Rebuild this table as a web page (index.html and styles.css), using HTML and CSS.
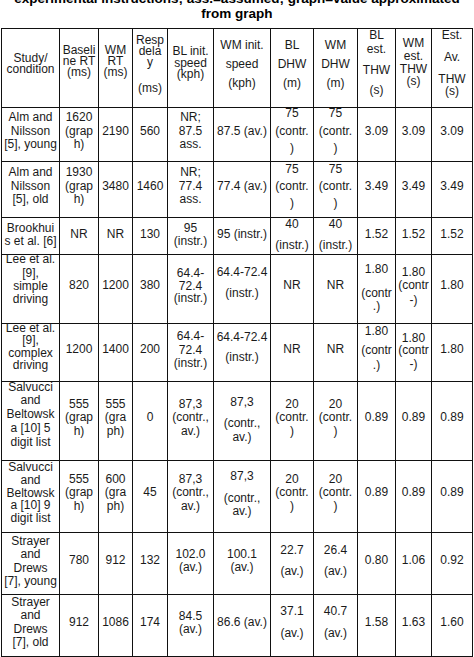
FILE: index.html
```html
<!DOCTYPE html>
<html lang="en">
<head>
<meta charset="utf-8">
<title>Table</title>
<link rel="stylesheet" href="styles.css">
</head>
<body>
<div class="title">experimental instructions; ass.=assumed; graph=value approximated<br>from graph</div>
<div class="grid">
  <!-- header -->
  <div class="c lh11 pb8"><span>Study/</span><span>condition</span></div>
  <div class="c lh11 pb14"><span>Baseli</span><span>ne RT</span><span>(ms)</span></div>
  <div class="c lh11 pb14"><span>WM</span><span>RT</span><span>(ms)</span></div>
  <div class="c lh113 pb7"><span>Resp</span><span>dela</span><span>y</span><span class="m14">(ms)</span></div>
  <div class="c lh117 pb9"><span>BL init.</span><span>speed</span><span>(kph)</span></div>
  <div class="c lh19 pb8"><span>WM init.</span><span>speed</span><span>(kph)</span></div>
  <div class="c lh19 pb8"><span>BL</span><span>DHW</span><span>(m)</span></div>
  <div class="c lh19 pb8"><span>WM</span><span>DHW</span><span>(m)</span></div>
  <div class="c lh12 pb11"><span>BL</span><span class="m2">est.</span><span class="m9">THW</span><span class="m8">(s)</span></div>
  <div class="c lh128 pb11"><span>WM</span><span>est.</span><span>THW</span><span>(s)</span></div>
  <div class="c lh12 pb10"><span>Est.</span><span class="m10">Av.</span><span class="m10">THW</span><span>(s)</span></div>

  <!-- row 1 -->
  <div class="c"><span>Alm and</span><span>Nilsson</span><span>[5], young</span></div>
  <div class="c"><span>1620</span><span>(grap</span><span>h)</span></div>
  <div class="c">2190</div>
  <div class="c">560</div>
  <div class="c"><span>NR;</span><span>87.5</span><span>ass.</span></div>
  <div class="c">87.5 (av.)</div>
  <div class="c lh175"><span>75</span><span>(contr.</span><span>)</span></div>
  <div class="c lh175"><span>75</span><span>(contr.</span><span>)</span></div>
  <div class="c">3.09</div>
  <div class="c">3.09</div>
  <div class="c">3.09</div>

  <!-- row 2 -->
  <div class="c"><span>Alm and</span><span>Nilsson</span><span>[5], old</span></div>
  <div class="c"><span>1930</span><span>(grap</span><span>h)</span></div>
  <div class="c">3480</div>
  <div class="c">1460</div>
  <div class="c"><span>NR;</span><span>77.4</span><span>ass.</span></div>
  <div class="c">77.4 (av.)</div>
  <div class="c lh17"><span>75</span><span>(contr.</span><span>)</span></div>
  <div class="c lh17"><span>75</span><span>(contr.</span><span>)</span></div>
  <div class="c">3.49</div>
  <div class="c">3.49</div>
  <div class="c">3.49</div>

  <!-- row 3 -->
  <div class="c pb2"><span>Brookhui</span><span>s et al. [6]</span></div>
  <div class="c pb2">NR</div>
  <div class="c pb2">NR</div>
  <div class="c pb2">130</div>
  <div class="c pb2"><span>95</span><span>(instr.)</span></div>
  <div class="c pb2">95 (instr.)</div>
  <div class="c pb2 lh21"><span>40</span><span>(instr.)</span></div>
  <div class="c pb2 lh21"><span>40</span><span>(instr.)</span></div>
  <div class="c pb2">1.52</div>
  <div class="c pb2">1.52</div>
  <div class="c pb2">1.52</div>

  <!-- row 4 -->
  <div class="c lh133 pb18"><span>Lee et al.</span><span>[9],</span><span>simple</span><span>driving</span></div>
  <div class="c">820</div>
  <div class="c">1200</div>
  <div class="c">380</div>
  <div class="c lh128"><span>64.4-</span><span>72.4</span><span>(instr.)</span></div>
  <div class="c lh206 pb12"><span>64.4-72.4</span><span>(instr.)</span></div>
  <div class="c">NR</div>
  <div class="c">NR</div>
  <div class="c lh127 pb2"><span>1.80</span><span class="m11">(contr</span><span>.)</span></div>
  <div class="c lh125 pb5"><span>1.80</span><span>(contr</span><span class="m3">-)</span></div>
  <div class="c">1.80</div>

  <!-- row 5 -->
  <div class="c lh122 pb12"><span>Lee et al.</span><span>[9],</span><span>complex</span><span>driving</span></div>
  <div class="c">1200</div>
  <div class="c">1400</div>
  <div class="c">200</div>
  <div class="c lh136 pb4"><span>64.4-</span><span>72.4</span><span>(instr.)</span></div>
  <div class="c lh20 pb12"><span>64.4-72.4</span><span>(instr.)</span></div>
  <div class="c">NR</div>
  <div class="c">NR</div>
  <div class="c lh125 pb8"><span>1.80</span><span class="m6">(contr</span><span class="m3">.)</span></div>
  <div class="c lh12 pb4"><span>1.80</span><span>(contr</span><span class="m2">-)</span></div>
  <div class="c">1.80</div>

  <!-- row 6 -->
  <div class="c lh138 pb12"><span>Salvucci</span><span>and</span><span>Beltowsk</span><span>a [10] 5</span><span>digit list</span></div>
  <div class="c"><span>555</span><span>(grap</span><span>h)</span></div>
  <div class="c"><span>555</span><span>(gra</span><span>ph)</span></div>
  <div class="c">0</div>
  <div class="c"><span>87,3</span><span>(contr.,</span><span>av.)</span></div>
  <div class="c lh133 pb2"><span>87,3</span><span class="m8">(contr.,</span><span>av.)</span></div>
  <div class="c"><span>20</span><span>(contr.</span><span>)</span></div>
  <div class="c"><span>20</span><span>(contr.</span><span>)</span></div>
  <div class="c">0.89</div>
  <div class="c">0.89</div>
  <div class="c">0.89</div>

  <!-- row 7 -->
  <div class="c lh1275 pb7"><span>Salvucci</span><span>and</span><span>Beltowsk</span><span>a [10] 9</span><span>digit list</span></div>
  <div class="c lh133 pb7"><span>555</span><span>(grap</span><span>h)</span></div>
  <div class="c lh133 pb7"><span>600</span><span>(gra</span><span>ph)</span></div>
  <div class="c pb7">45</div>
  <div class="c lh133 pb7"><span>87,3</span><span>(contr.,</span><span>av.)</span></div>
  <div class="c lh133 pb5"><span>87,3</span><span class="m9">(contr.,</span><span>av.)</span></div>
  <div class="c lh133 pb7"><span>20</span><span>(contr.</span><span>)</span></div>
  <div class="c lh133 pb7"><span>20</span><span>(contr.</span><span>)</span></div>
  <div class="c pb7">0.89</div>
  <div class="c pb7">0.89</div>
  <div class="c pb7">0.89</div>

  <!-- row 8 -->
  <div class="c lh131 pb4"><span>Strayer</span><span>and</span><span>Drews</span><span>[7], young</span></div>
  <div class="c">780</div>
  <div class="c">912</div>
  <div class="c">132</div>
  <div class="c lh127"><span>102.0</span><span>(av.)</span></div>
  <div class="c lh127"><span>100.1</span><span>(av.)</span></div>
  <div class="c lh21"><span>22.7</span><span>(av.)</span></div>
  <div class="c lh21"><span>26.4</span><span>(av.)</span></div>
  <div class="c">0.80</div>
  <div class="c">1.06</div>
  <div class="c">0.92</div>

  <!-- row 9 -->
  <div class="c lh133"><span>Strayer</span><span>and</span><span>Drews</span><span>[7], old</span></div>
  <div class="c">912</div>
  <div class="c">1086</div>
  <div class="c">174</div>
  <div class="c lh123"><span>84.5</span><span>(av.)</span></div>
  <div class="c">86.6 (av.)</div>
  <div class="c lh216"><span>37.1</span><span>(av.)</span></div>
  <div class="c lh216"><span>40.7</span><span>(av.)</span></div>
  <div class="c">1.58</div>
  <div class="c">1.63</div>
  <div class="c">1.60</div>
</div>
</body>
</html>
```
FILE: styles.css
```css
html, body {
  margin: 0;
  padding: 0;
  background: #fff;
}
body {
  font-family: "Liberation Sans", Arial, Helvetica, sans-serif;
  color: #1a1a1a;
  width: 474px;
}
.title {
  margin: -9px 0 0;
  font-size: 13.5px;
  line-height: 15px;
  font-weight: bold;
  text-align: center;
  color: #000;
  white-space: nowrap;
}
.grid {
  display: grid;
  width: max-content;
  margin: 7px 0 0 1px;
  grid-template-columns: 58px 39px 34px 35px 46px 57px 43px 44px 38px 36px 41px;
  grid-template-rows: 79px 54px 56px 37px 69px 58px 79px 72px 62px 62px;
  border-top: 1px solid #111;
  border-left: 1px solid #111;
}
.c {
  box-sizing: border-box;
  display: flex;
  flex-direction: column;
  justify-content: center;
  align-items: center;
  text-align: center;
  border-right: 1px solid #111;
  border-bottom: 1px solid #111;
  padding: 0 0 6px;
  font-size: 12px;
  line-height: 13.5px;
  white-space: nowrap;
  min-width: 0;
  min-height: 0;
}
.c span { display: block; }

.lh11 { line-height: 11px; }
.lh113 { line-height: 11.3px; }
.lh117 { line-height: 11.7px; }
.lh12 { line-height: 12px; }
.lh122 { line-height: 12.2px; }
.lh123 { line-height: 12.3px; }
.lh125 { line-height: 12.5px; }
.lh127 { line-height: 12.7px; }
.lh1275 { line-height: 12.75px; }
.lh128 { line-height: 12.8px; }
.lh131 { line-height: 13.1px; }
.lh133 { line-height: 13.3px; }
.lh136 { line-height: 13.6px; }
.lh138 { line-height: 13.8px; }
.lh17 { line-height: 17px; }
.lh175 { line-height: 17.5px; }
.lh19 { line-height: 19px; }
.lh20 { line-height: 20px; }
.lh206 { line-height: 20.6px; }
.lh21 { line-height: 21px; }
.lh216 { line-height: 21.6px; }

.pb2 { padding-bottom: 2px; }
.pb4 { padding-bottom: 4px; }
.pb5 { padding-bottom: 5px; }
.pb7 { padding-bottom: 7px; }
.pb8 { padding-bottom: 8px; }
.pb9 { padding-bottom: 9px; }
.pb10 { padding-bottom: 10px; }
.pb11 { padding-bottom: 11px; }
.pb12 { padding-bottom: 12px; }
.pb14 { padding-bottom: 14px; }
.pb18 { padding-bottom: 18px; }

.m2 { margin-top: 2px; }
.m3 { margin-top: 3px; }
.m6 { margin-top: 6px; }
.m8 { margin-top: 8px; }
.m9 { margin-top: 9px; }
.m10 { margin-top: 10px; }
.m11 { margin-top: 11px; }
.m14 { margin-top: 14.5px; }
```
